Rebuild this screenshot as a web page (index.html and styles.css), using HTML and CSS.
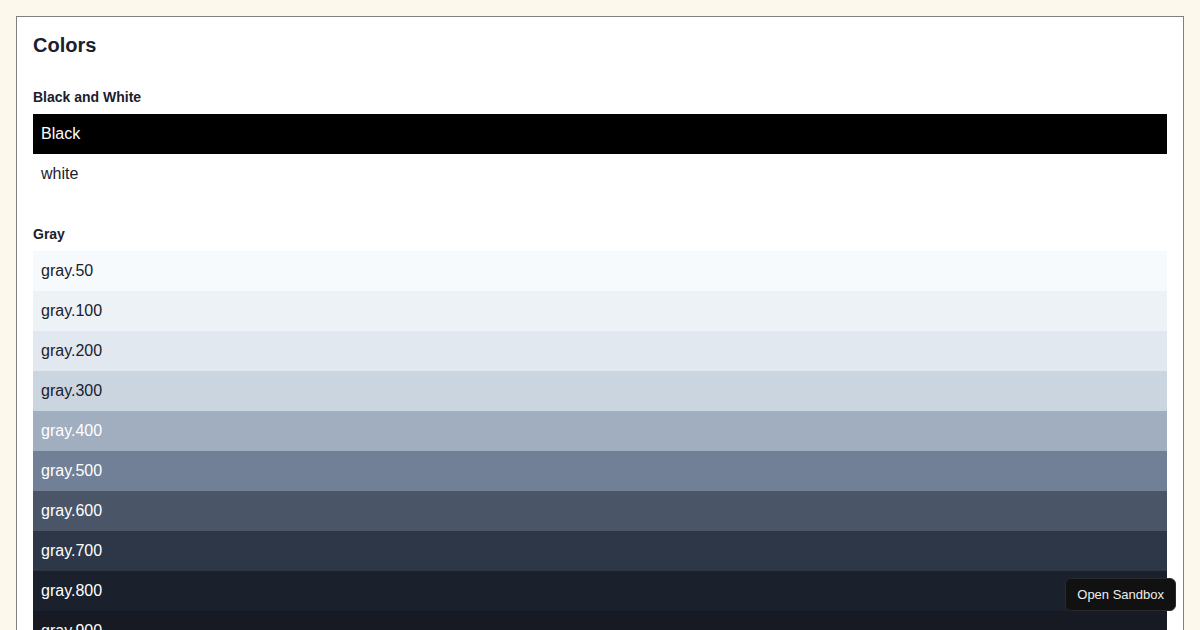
FILE: index.html
```html
<!DOCTYPE html>
<html>
<head>
<meta charset="utf-8">
<link rel="stylesheet" href="styles.css">
</head>
<body>
<div class="panel">
  <h2 class="title">Colors</h2>
  <section class="group">
    <h3 class="group-title">Black and White</h3>
    <div class="swatch sw-black light">Black</div>
    <div class="swatch sw-white">white</div>
  </section>
  <section class="group">
    <h3 class="group-title">Gray</h3>
    <div class="swatch g50">gray.50</div>
    <div class="swatch g100">gray.100</div>
    <div class="swatch g200">gray.200</div>
    <div class="swatch g300">gray.300</div>
    <div class="swatch g400 light">gray.400</div>
    <div class="swatch g500 light">gray.500</div>
    <div class="swatch g600 light">gray.600</div>
    <div class="swatch g700 light">gray.700</div>
    <div class="swatch g800 light">gray.800</div>
    <div class="swatch g900 light">gray.900</div>
  </section>
</div>
<button class="sandbox">Open Sandbox</button>
</body>
</html>
```
FILE: styles.css
```css
html, body { margin: 0; padding: 0; }
body {
  background: #fdf8ec;
  font-family: "Liberation Sans", Arial, sans-serif;
  color: #1a202c;
  padding: 16px;
}
.panel {
  background: #fff;
  border: 1px solid #808080;
  padding: 16px;
  display: flex;
  flex-direction: column;
  gap: 32px;
}
.title {
  margin: 0;
  font-size: 20px;
  line-height: 24px;
  font-weight: 700;
}
.group { display: flex; flex-direction: column; }
.group-title {
  margin: 0 0 8px;
  font-size: 14px;
  line-height: 17px;
  font-weight: 700;
}
.swatch {
  height: 40px;
  padding: 0 8px;
  display: flex;
  align-items: center;
  font-size: 16px;
}
.light { color: #fff; }
.sw-black { background: #000; }
.sw-white { background: #fff; }
.g50 { background: #f7fafc; }
.g100 { background: #edf2f7; }
.g200 { background: #e2e8f0; }
.g300 { background: #cbd5e0; }
.g400 { background: #a0aec0; }
.g500 { background: #718096; }
.g600 { background: #4a5568; }
.g700 { background: #2d3748; }
.g800 { background: #1a202c; }
.g900 { background: #171923; }
.sandbox {
  position: fixed;
  right: 24px;
  bottom: 19px;
  height: 33px;
  padding: 0 11px;
  background: #111;
  color: #eee;
  border: 1px solid #2a2a2a;
  border-radius: 6px;
  font-family: "Liberation Sans", Arial, sans-serif;
  font-size: 13px;
}
```
